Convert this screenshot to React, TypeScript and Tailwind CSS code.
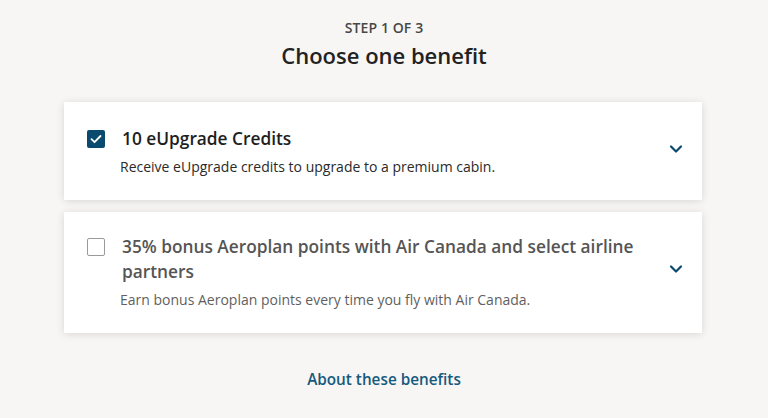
import React, { useState } from 'react';

interface Benefit {
  id: string;
  title: string;
  description: string;
}

const benefits: Benefit[] = [
  {
    id: 'eupgrade',
    title: '10 eUpgrade Credits',
    description: 'Receive eUpgrade credits to upgrade to a premium cabin.',
  },
  {
    id: 'aeroplan',
    title: '35% bonus Aeroplan points with Air Canada and select airline partners',
    description: 'Earn bonus Aeroplan points every time you fly with Air Canada.',
  },
];

const CheckIcon = () => (
  <svg viewBox="0 0 18 18" className="w-[18px] h-[18px]">
    <path d="M4.5 9.2l3 3 6-6.2" fill="none" stroke="white" strokeWidth="1.8" strokeLinecap="round" strokeLinejoin="round" />
  </svg>
);

const ChevronDown = () => (
  <svg viewBox="0 0 14 14" className="w-[14px] h-[14px]">
    <path d="M2 4.5l5 5 5-5" fill="none" stroke="#0b4a6f" strokeWidth="2.2" strokeLinecap="round" strokeLinejoin="round" />
  </svg>
);

export default function App() {
  const [selected, setSelected] = useState('eupgrade');

  return (
    <div
      className="min-h-[418px] w-full bg-[#f7f6f5] flex flex-col items-center pt-[18px]"
      style={{ fontFamily: '"Open Sans", "Noto Sans", sans-serif' }}
    >
      <p className="text-[14px] leading-[20px] font-semibold text-[#474747] tracking-[0.1px]">STEP 1 OF 3</p>
      <h1 className="text-[22px] leading-[30px] font-semibold text-[#222] mt-[2px]">Choose one benefit</h1>

      <div className="w-[638px] mt-[32px] mr-[2px] flex flex-col gap-[12px]">
        {benefits.map((b, i) => {
          const checked = selected === b.id;
          return (
            <div
              key={b.id}
              className={`bg-white shadow-[0_1px_8px_rgba(0,0,0,0.13)] flex items-start pl-[23px] pr-[19px] pb-[23px] cursor-pointer ${i === 0 ? 'pt-[24px]' : 'pt-[22px]'}`}
              onClick={() => setSelected(b.id)}
            >
              <div className="h-[25px] flex items-center shrink-0">
                {checked ? (
                  <div className="w-[18px] h-[18px] rounded-[2px] bg-[#0b4a6f] flex items-center justify-center">
                    <CheckIcon />
                  </div>
                ) : (
                  <div className="w-[18px] h-[18px] rounded-[2px] border-[1.5px] border-[#9a9a9a] bg-white" />
                )}
              </div>
              <div className="flex-1 ml-[17px] pr-[30px]">
                <h3
                  className={`text-[17.3px] leading-[25px] font-semibold ${checked ? 'text-[#1e1e1e]' : 'text-[#555]'}`}
                >
                  {b.title}
                </h3>
                <p
                  className={`mt-[6px] leading-[20px] text-[14px] -ml-[2px] ${checked ? 'text-[#2a2a2a]' : 'text-[#5f5f5f]'}`}
                >
                  {b.description}
                </p>
              </div>
              <div className="self-center mb-[6px] shrink-0">
                <ChevronDown />
              </div>
            </div>
          );
        })}
      </div>

      <a href="#" className="mt-[35px] text-[15.3px] leading-[22px] font-semibold text-[#155a7e]">
        About these benefits
      </a>
    </div>
  );
}
